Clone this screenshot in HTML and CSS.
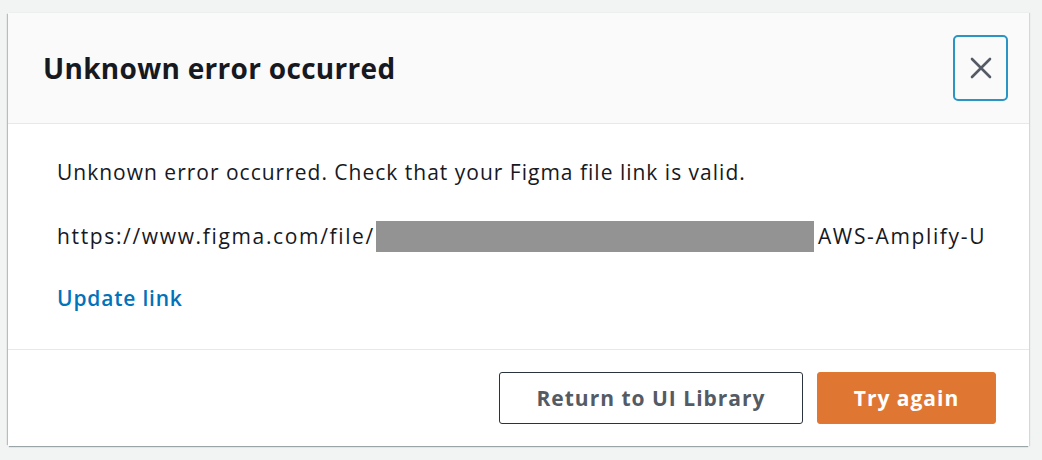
FILE: index.html
```html
<!DOCTYPE html>
<html lang="en">
<head>
<meta charset="utf-8">
<title>Unknown error occurred</title>
<link rel="stylesheet" href="styles.css">
</head>
<body>
<div class="modal">
  <div class="modal-header">
    <h2 class="modal-title">Unknown error occurred</h2>
    <button class="close-btn" aria-label="Close">
      <svg width="22" height="22" viewBox="0 0 22 22" fill="none" stroke="#545b64" stroke-width="2.6" stroke-linecap="round">
        <path d="M2 2 L20 20 M20 2 L2 20"/>
      </svg>
    </button>
  </div>
  <div class="modal-body">
    <p class="line first">Unknown error occurred. Check that your Figma file link is valid.</p>
    <p class="line second">https://www.figma.com/file/<span class="redact"></span>AWS-Amplify-U</p>
    <p class="line"><a class="link" href="#">Update link</a></p>
  </div>
  <div class="modal-footer">
    <button class="btn btn-normal">Return to UI Library</button>
    <button class="btn btn-primary">Try again</button>
  </div>
</div>
</body>
</html>
```

FILE: styles.css
```css
* { box-sizing: border-box; }
html, body { margin: 0; padding: 0; }
body {
  background: #f2f3f3;
  font-family: "Open Sans", "Noto Sans", sans-serif;
  color: #16191f;
  width: 1042px;
  height: 460px;
  overflow: hidden;
}
.modal {
  margin: 13px 0 0 8px;
  width: 1021px;
  height: 433px;
  background: #fff;
  display: flex;
  flex-direction: column;
  box-shadow: 0 2px 1px -1px rgba(0, 28, 36, 0.35), -2px 0 1px -1px rgba(0, 28, 36, 0.25), 1px 0 1px 0 rgba(0, 28, 36, 0.12);
}
.modal-header {
  height: 111px;
  background: #fafafa;
  border-bottom: 1px solid #e6e9e9;
  display: flex;
  align-items: center;
  justify-content: space-between;
  padding: 0 21px 0 35px;
}
.modal-title {
  margin: 0;
  font-size: 28px;
  font-weight: 700;
  letter-spacing: 0.3px;
  color: #16191f;
}
.close-btn {
  width: 55px;
  height: 66px;
  border: 2px solid #2a94c4;
  border-radius: 5px;
  background: #fafafa;
  display: flex;
  align-items: center;
  justify-content: center;
  padding: 0;
}
.modal-body {
  height: 226px;
  border-bottom: 1px solid #e6e9e9;
  padding: 26px 44px 0 49px;
  overflow: hidden;
}
.line {
  margin: 0;
  height: 62px;
  line-height: 44px;
  font-size: 21px;
  letter-spacing: 1px;
  white-space: nowrap;
}
.line.first { height: 64px; }
.line.second { letter-spacing: 1.65px; }
.redact {
  display: inline-block;
  width: 438px;
  height: 31px;
  background: #939393;
  margin: 0 4px 0 1px;
  vertical-align: middle;
  position: relative;
  top: -2px;
}
.link {
  color: #0073bb;
  text-decoration: none;
  font-weight: 600;
  letter-spacing: 0.8px;
}
.modal-footer {
  flex: 1;
  display: flex;
  align-items: center;
  justify-content: flex-end;
  gap: 14px;
  padding: 0 33px 0 0;
}
.btn {
  height: 52px;
  font-family: "Open Sans", "Noto Sans", sans-serif;
  font-size: 21px;
  font-weight: 700;
  letter-spacing: 1px;
  border-radius: 3px;
  padding: 0;
  cursor: pointer;
}
.btn-normal {
  width: 304px;
  background: #fff;
  color: #545b64;
  border: 1px solid #2b333e;
}
.btn-primary {
  width: 179px;
  background: #df7733;
  color: #fff;
  border: 1px solid #e0782f;
}
```
